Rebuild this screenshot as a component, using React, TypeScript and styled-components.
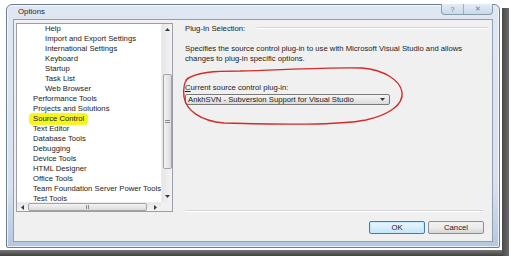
import React from 'react';
import styled, { createGlobalStyle } from 'styled-components';

const GlobalStyle = createGlobalStyle`
  html, body {
    margin: 0;
    padding: 0;
    background: #ffffff;
  }
  body {
    font-family: "Liberation Sans", Arial, sans-serif;
    font-size: 7.7px;
    color: #1b1b1b;
  }
`

const Page = styled.div`
  position: relative;
  width: 509px;
  height: 256px;
  box-sizing: border-box;
  padding: 4px 0 0 6px;
  overflow: hidden;
  background:
    linear-gradient(to right, #4a4a4a, #6a6a6a) right 8px / 7px 100% no-repeat,
    linear-gradient(to bottom, #777, #3f3f3f) left bottom / 100% 6px no-repeat,
    #ffffff;
`

const Window = styled.div`
  width: 494px;
  height: 244px;
  box-sizing: border-box;
  border: 1px solid #6f7d8e;
  border-radius: 6px 6px 2px 2px;
  background: linear-gradient(to bottom, #dfe8f2 0%, #d7e2ee 75%, #b3c8df 100%);
  box-shadow: inset 0 0 0 1px rgba(255, 255, 255, 0.7);
  display: flex;
  flex-direction: column;
  padding: 0 6px 5px 6px;
`

const TitleBar = styled.div`
  height: 14px;
  display: flex;
  justify-content: space-between;
  align-items: flex-start;
`

const TitleText = styled.span`
  padding: 2px 0 0 5px;
  font-size: 7.8px;
  line-height: 10px;
  color: #1e2630;
`

const TitleButtons = styled.div`
  display: flex;
  height: 10px;
  margin-top: -1px;
  border: 1px solid #8c9cb0;
  border-top: none;
  border-radius: 0 0 4px 4px;
  background: linear-gradient(to bottom, #e4ecf5, #ccd9e7);
  overflow: hidden;
`

const TitleButton = styled.div<{ w: number }>`
  width: ${({ w }) => w}px;
  display: flex;
  align-items: center;
  justify-content: center;
  font-size: 7px;
  color: #6a7a8e;
  & + & {
    border-left: 1px solid #9dadc0;
  }
`

const Client = styled.div`
  flex: 1;
  border: 1px solid #8fa0b5;
  background: #f0f0f0;
  padding: 3px 2px 0 2px;
  display: flex;
  flex-direction: column;
`

const Main = styled.div`
  display: flex;
  gap: 12px;
  height: 189px;
`

const TreeBox = styled.div`
  width: 157px;
  box-sizing: border-box;
  border: 1px solid #9a9ea6;
  background: #ffffff;
  display: grid;
  grid-template-columns: 1fr 11px;
  grid-template-rows: 1fr 9px;
  overflow: hidden;
`

const TreeList = styled.div`
  overflow: hidden;
`

const TreeItem = styled.div<{ level: number }>`
  height: 10px;
  line-height: 10px;
  white-space: nowrap;
  padding-left: ${({ level }) => (level === 1 ? 28 : 16)}px;
  color: #1b1b1b;
`

const Highlight = styled.span`
  display: inline-block;
  background: #f6f51c;
  margin-left: -3px;
  padding: 0 3px;
  border-radius: 3px;
  box-shadow: 0 0 1px 1px #f6f51c;
`

const VScroll = styled.div`
  display: flex;
  flex-direction: column;
  background: linear-gradient(to right, #e6e6e6, #f4f4f4);
  border-left: 1px solid #ececec;
`

const HScroll = styled.div`
  display: flex;
  background: linear-gradient(to bottom, #e6e6e6, #f4f4f4);
  border-top: 1px solid #ececec;
`

const ArrowCell = styled.div<{ size: number }>`
  flex: 0 0 ${({ size }) => size}px;
  display: flex;
  align-items: center;
  justify-content: center;
`

const Track = styled.div<{ vertical?: boolean }>`
  flex: 1;
  display: flex;
  flex-direction: ${({ vertical }) => (vertical ? 'column' : 'row')};
`

const Thumb = styled.div<{ vertical?: boolean }>`
  box-sizing: border-box;
  border: 1px solid #a3a3a3;
  border-radius: 2px;
  background: ${({ vertical }) =>
    vertical
      ? 'linear-gradient(to right, #f3f3f3, #dcdcdc)'
      : 'linear-gradient(to bottom, #f3f3f3, #dcdcdc)'};
  display: flex;
  align-items: center;
  justify-content: center;
  ${({ vertical }) => (vertical ? 'margin: 0 1px; width: 9px;' : 'margin: 0; height: 8px;')}
`

const Grip = styled.div<{ vertical?: boolean }>`
  ${({ vertical }) =>
    vertical
      ? 'width: 5px; height: 4px; background: repeating-linear-gradient(to bottom, #8a8a8a 0 1px, transparent 1px 2px);'
      : 'width: 4px; height: 4px; background: repeating-linear-gradient(to right, #8a8a8a 0 1px, transparent 1px 2px);'}
`

const Corner = styled.div`
  background: #f0f0f0;
`

const RightPanel = styled.div`
  flex: 1;
  display: flex;
  flex-direction: column;
  line-height: 10px;
`

const GroupHeader = styled.div`
  display: flex;
  align-items: center;
  margin-top: 1px;
  margin-right: 2px;
`

const HeaderLine = styled.div`
  flex: 1;
  height: 1px;
  margin-left: 12px;
  margin-top: -2px;
  background: #d5d5d5;
  border-bottom: 1px solid #ffffff;
`

const Description = styled.div`
  margin-top: 10px;
  white-space: nowrap;
`

const FieldLabel = styled.div`
  margin-top: 19px;
  & u {
    text-decoration: underline;
  }
`

const Select = styled.div`
  margin-top: 1px;
  width: 205px;
  height: 11px;
  box-sizing: border-box;
  border: 1px solid #7a7a7a;
  border-radius: 2px;
  background: linear-gradient(to bottom, #f4f4f4 0%, #e9e9e9 50%, #dadada 100%);
  display: flex;
  align-items: center;
  justify-content: space-between;
  padding: 0 4px 0 2px;
  line-height: 9px;
`

const Spacer = styled.div`
  flex: 1;
`

const Separator = styled.div`
  height: 1px;
  margin-right: 6px;
  background: #d5d5d5;
  border-bottom: 1px solid #ffffff;
`

const Footer = styled.div`
  display: flex;
  justify-content: flex-end;
  gap: 3px;
  padding: 9px 6px 0 0;
`

const Button = styled.div<{ primary?: boolean }>`
  width: 56px;
  height: 13px;
  box-sizing: border-box;
  border-radius: 2px;
  display: flex;
  align-items: center;
  justify-content: center;
  color: #1b1b1b;
  ${({ primary }) =>
    primary
      ? `
      border: 1px solid #3c7fb1;
      background: linear-gradient(to bottom, #eaf6fd 0%, #d9f0fc 50%, #bee6fd 100%);
      box-shadow: inset 0 0 0 1px #c6e8fb;
    `
      : `
      border: 1px solid #8e8e8e;
      background: linear-gradient(to bottom, #f2f2f2 0%, #ebebeb 50%, #d6d6d6 100%);
    `}
`

const Annotation = styled.svg`
  position: absolute;
  left: 0;
  top: 0;
  pointer-events: none;
`

const Tri: React.FC<{ dir: 'up' | 'down' | 'left' | 'right'; size?: number }> = ({ dir, size = 5 }) => {
  const pts = {
    up: '0,4 5,4 2.5,1',
    down: '0,1 5,1 2.5,4',
    left: '4,0 4,5 1,2.5',
    right: '1,0 1,5 4,2.5',
  }[dir];
  return (
    <svg width={size} height={size} viewBox="0 0 5 5">
      <polygon points={pts} fill="#3a3a3a" />
    </svg>
  );
};

const treeItems: { label: string; level: number }[] = [
  { label: 'Help', level: 1 },
  { label: 'Import and Export Settings', level: 1 },
  { label: 'International Settings', level: 1 },
  { label: 'Keyboard', level: 1 },
  { label: 'Startup', level: 1 },
  { label: 'Task List', level: 1 },
  { label: 'Web Browser', level: 1 },
  { label: 'Performance Tools', level: 0 },
  { label: 'Projects and Solutions', level: 0 },
  { label: 'Source Control', level: 0 },
  { label: 'Text Editor', level: 0 },
  { label: 'Database Tools', level: 0 },
  { label: 'Debugging', level: 0 },
  { label: 'Device Tools', level: 0 },
  { label: 'HTML Designer', level: 0 },
  { label: 'Office Tools', level: 0 },
  { label: 'Team Foundation Server Power Tools', level: 0 },
  { label: 'Test Tools', level: 0 },
];

const App: React.FC = () => {
  return (
    <Page>
      <GlobalStyle />
      <Window>
        <TitleBar>
          <TitleText>Options</TitleText>
          <TitleButtons>
            <TitleButton w={21}>?</TitleButton>
            <TitleButton w={28}>✕</TitleButton>
          </TitleButtons>
        </TitleBar>
        <Client>
          <Main>
            <TreeBox>
              <TreeList>
                {treeItems.map((it) => (
                  <TreeItem key={it.label} level={it.level}>
                    {it.label === 'Source Control' ? <Highlight>{it.label}</Highlight> : it.label}
                  </TreeItem>
                ))}
              </TreeList>
              <VScroll>
                <ArrowCell size={11}><Tri dir="up" /></ArrowCell>
                <Track vertical>
                  <Thumb vertical style={{ marginTop: 39, height: 95 }}>
                    <Grip vertical />
                  </Thumb>
                </Track>
                <ArrowCell size={11}><Tri dir="down" /></ArrowCell>
              </VScroll>
              <HScroll>
                <ArrowCell size={11}><Tri dir="left" /></ArrowCell>
                <Track>
                  <Thumb style={{ width: 119 }}>
                    <Grip />
                  </Thumb>
                </Track>
                <ArrowCell size={11}><Tri dir="right" /></ArrowCell>
              </HScroll>
              <Corner />
            </TreeBox>
            <RightPanel>
              <GroupHeader>
                <span>Plug-In Selection:</span>
                <HeaderLine />
              </GroupHeader>
              <Description>
                Specifies the source control plug-in to use with Microsoft Visual Studio and allows
                <br />
                changes to plug-in specific options.
              </Description>
              <FieldLabel>
                <u>C</u>urrent source control plug-in:
              </FieldLabel>
              <Select>
                <span>AnkhSVN - Subversion Support for Visual Studio</span>
                <Tri dir="down" />
              </Select>
              <Spacer />
              <Separator />
            </RightPanel>
          </Main>
          <Footer>
            <Button primary>OK</Button>
            <Button>Cancel</Button>
          </Footer>
        </Client>
      </Window>
      <Annotation width={509} height={256} viewBox="0 0 509 256">
        <path
          d="M 186 80 C 195 72, 215 71, 240 71 C 280 70, 330 67, 362 68 C 384 70, 400 80, 402 92 C 404 105, 388 115, 366 120 C 335 126, 270 124, 224 123 C 200 121, 186 110, 184 97 C 183 88, 184 82, 188 78"
          fill="none"
          stroke="#d42a2a"
          strokeWidth={1.4}
          strokeLinecap="round"
        />
      </Annotation>
    </Page>
  );
};

export default App;
